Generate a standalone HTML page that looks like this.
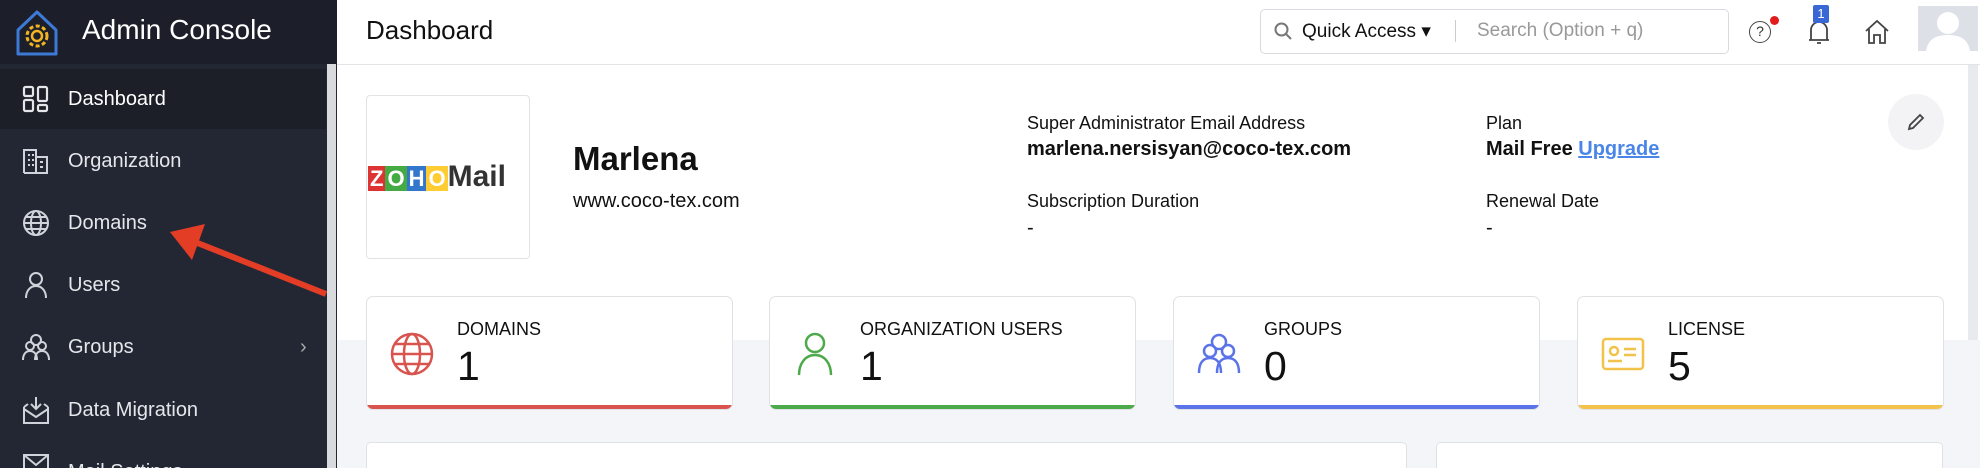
<!DOCTYPE html>
<html style="overflow:hidden;width:1980px;height:468px"><head><meta charset="utf-8"><style>
*{box-sizing:border-box;margin:0;padding:0}
body{width:1980px;height:468px;overflow:hidden;font-family:"Liberation Sans",sans-serif;background:#fff;color:#111}
#wrap{position:relative;width:1980px;height:468px;overflow:hidden}
.abs{position:absolute}
#side{left:0;top:0;width:337px;height:468px;background:#232734}
#sideh{left:0;top:0;width:337px;height:64px;background:#1c1f29}
#sb{left:327px;top:64px;width:9px;height:404px;background:#d9dadd}
.item{position:absolute;left:0;width:326px;height:60px;color:#e4e6ea;font-size:20px;display:flex;align-items:center;padding-left:68px}
.item svg{position:absolute;left:22px;top:50%;transform:translateY(-50%)}
.ttl{font-size:26px}
.card{position:absolute;top:296px;width:367px;height:114px;background:#fff;border:1px solid #dfe1e5;border-radius:7px;overflow:hidden}
.card .lbl{position:absolute;left:90px;top:22px;font-size:18px;color:#111}
.card .num{position:absolute;left:90px;top:46px;font-size:41px}
.card .bar{position:absolute;left:0;right:0;bottom:0;height:4px}
.card svg{position:absolute;left:22px;top:34px}
</style></head><body><div id="wrap">
<div class="abs" style="left:337px;top:340px;width:1643px;height:128px;background:#f4f5f8"></div>
<div class="abs" style="left:337px;top:64px;width:1643px;height:1px;background:#e3e4e8"></div>
<div class="abs" style="left:1968px;top:65px;width:10px;height:275px;background:#e9eaed"></div>

<div id="side" class="abs"></div>
<div id="sideh" class="abs"></div>
<div class="abs" style="left:0;top:69px;width:326px;height:60px;background:#1c1f28"></div>
<div id="sb" class="abs"></div>
<svg class="abs" style="left:14px;top:8px" width="46" height="50" viewBox="0 0 46 50"><path d="M4 22 L23 4 L42 22 V46 H4Z" fill="none" stroke="#3d7ad6" stroke-width="3" stroke-linejoin="round"/><circle cx="23" cy="28" r="10" fill="none" stroke="#f2b422" stroke-width="3" stroke-dasharray="4 2.5"/><circle cx="23" cy="28" r="5" fill="none" stroke="#f2b422" stroke-width="2.5"/></svg>
<div class="abs" style="left:82px;top:14px;color:#fff;font-size:28px">Admin Console</div>

<div class="item" style="top:69px;color:#fff"><svg width="28" height="28" viewBox="0 0 28 28" fill="none" stroke="#e4e6ea" stroke-width="2.2"><rect x="2" y="2" width="9" height="9" rx="1.5"/><rect x="16" y="2" width="9" height="14" rx="1.5"/><rect x="2" y="15" width="9" height="11" rx="1.5"/><rect x="16" y="20" width="9" height="6" rx="1.5"/></svg>Dashboard</div>
<div class="item" style="top:131px"><svg width="28" height="28" viewBox="0 0 28 28" fill="none" stroke="#d0d3d9" stroke-width="2"><path d="M2 26V3h12v23M14 10h11v16H2M6 8h2M10 8h2M6 13h2M10 13h2M6 18h2M10 18h2M18 15h3M18 20h3"/></svg>Organization</div>
<div class="item" style="top:193px"><svg width="28" height="28" viewBox="0 0 28 28" fill="none" stroke="#d0d3d9" stroke-width="2"><circle cx="14" cy="14" r="12"/><ellipse cx="14" cy="14" rx="5" ry="12"/><path d="M2 14h24M4 8h20M4 20h20"/></svg>Domains</div>
<div class="item" style="top:255px"><svg width="28" height="28" viewBox="0 0 28 28" fill="none" stroke="#d0d3d9" stroke-width="2"><circle cx="14" cy="8" r="6"/><path d="M4 27c0-7 4-12 10-12s10 5 10 12"/></svg>Users</div>
<div class="item" style="top:317px"><svg width="28" height="28" viewBox="0 0 28 28" fill="none" stroke="#d0d3d9" stroke-width="2"><circle cx="14" cy="7" r="5"/><circle cx="8" cy="13" r="4"/><circle cx="20" cy="13" r="4"/><path d="M1 27c0-6 3-9 7-9s7 3 7 9M13 27c0-6 3-9 7-9s7 3 7 9"/></svg>Groups<span style="position:absolute;left:300px;color:#aaa;font-size:20px">›</span></div>
<div class="item" style="top:380px"><svg width="28" height="30" viewBox="0 0 28 30" fill="none" stroke="#d0d3d9" stroke-width="2"><path d="M2 12v16h24V12M2 12l4-3M26 12l-4-3M2 14l12 8 12-8M14 2v12M9 9l5 5 5-5"/></svg>Data Migration</div>
<div class="item" style="top:442px;height:26px;align-items:flex-start;overflow:hidden"><svg style="top:22px" width="28" height="28" viewBox="0 0 28 28" fill="none" stroke="#d0d3d9" stroke-width="2"><rect x="2" y="5" width="24" height="18"/><path d="M2 5l12 10 12-10"/></svg><span style="margin-top:19px">Mail Settings</span></div>
<svg class="abs" style="left:160px;top:222px" width="175" height="80"><line x1="166" y1="72" x2="30" y2="18" stroke="#e43d26" stroke-width="6"/><polygon points="10,10 45,2 32,38" fill="#e43d26"/></svg>

<div class="abs ttl" style="left:366px;top:15px">Dashboard</div>
<div class="abs" style="left:1260px;top:9px;width:469px;height:45px;border:1px solid #d8dadf;border-radius:5px"></div>
<svg class="abs" style="left:1274px;top:22px" width="18" height="18" fill="none" stroke="#777" stroke-width="2"><circle cx="7.5" cy="7.5" r="6"/><path d="M12 12l5 5"/></svg>
<div class="abs" style="left:1302px;top:20px;font-size:19px">Quick Access ▾</div>
<div class="abs" style="left:1455px;top:20px;width:1px;height:22px;background:#ccc"></div>
<div class="abs" style="left:1477px;top:20px;font-size:19px;color:#999">Search (Option + q)</div>
<div class="abs" style="left:1749px;top:21px;width:22px;height:22px;border:1.5px solid #444;border-radius:50%;font-size:14px;text-align:center;line-height:19px;color:#333">?</div>
<div class="abs" style="left:1770px;top:16px;width:9px;height:9px;border-radius:50%;background:#e21c1c"></div>
<svg class="abs" style="left:1806px;top:18px" width="26" height="28" fill="none" stroke="#444" stroke-width="1.8"><path d="M5 22V12a8 8 0 0116 0v10H3h20M11 25h4"/></svg>
<div class="abs" style="left:1813px;top:5px;width:16px;height:18px;background:#3a67d6;color:#fff;font-size:13px;text-align:center;line-height:18px;border-radius:2px">1</div>
<svg class="abs" style="left:1864px;top:18px" width="26" height="28" fill="none" stroke="#444" stroke-width="1.8"><path d="M2 13L13 3l11 10M5 11v14h5v-8h6v8h5V11"/></svg>
<div class="abs" style="left:1918px;top:6px;width:60px;height:45px;background:#dde0e6;overflow:hidden"><svg width="60" height="45"><circle cx="30" cy="17" r="11" fill="#fff"/><path d="M8 45c2-12 10-16 22-16s20 4 22 16z" fill="#fff"/></svg></div>

<div class="abs" style="left:366px;top:95px;width:164px;height:164px;border:1px solid #e2e3e6;border-radius:4px"></div>
<div class="abs" style="left:368px;top:160px;font-size:22px;font-weight:bold"><span style="background:#d33;color:#fff;padding:0 2px">Z</span><span style="background:#4a4;color:#fff;padding:0 2px">O</span><span style="background:#37c;color:#fff;padding:0 2px">H</span><span style="background:#fc3;color:#fff;padding:0 2px">O</span><span style="font-size:30px;color:#333">Mail</span></div>
<div class="abs" style="left:573px;top:140px;font-size:33px;font-weight:bold">Marlena</div>
<div class="abs" style="left:573px;top:190px;font-size:20px">www.coco-tex.com</div>
<div class="abs" style="left:1027px;top:113px;font-size:18px">Super Administrator Email Address</div>
<div class="abs" style="left:1027px;top:138px;font-size:20px;font-weight:bold">marlena.nersisyan@coco-tex.com</div>
<div class="abs" style="left:1027px;top:191px;font-size:18px">Subscription Duration</div>
<div class="abs" style="left:1027px;top:217px;font-size:20px">-</div>
<div class="abs" style="left:1486px;top:113px;font-size:18px">Plan</div>
<div class="abs" style="left:1486px;top:138px;font-size:20px;font-weight:bold">Mail Free <span style="color:#4a86e8;text-decoration:underline">Upgrade</span></div>
<div class="abs" style="left:1486px;top:191px;font-size:18px">Renewal Date</div>
<div class="abs" style="left:1486px;top:217px;font-size:20px">-</div>
<div class="abs" style="left:1888px;top:94px;width:56px;height:56px;border-radius:50%;background:#f3f3f5"></div>
<svg class="abs" style="left:1906px;top:112px" width="20" height="20" fill="none" stroke="#444" stroke-width="1.8"><path d="M3 17l1-4L14 3l3 3L7 16z"/></svg>

<div class="card" style="left:366px"><svg width="46" height="46" fill="none" stroke="#d9534f" stroke-width="2.5"><circle cx="23" cy="23" r="20"/><ellipse cx="23" cy="23" rx="8" ry="20"/><path d="M3 23h40M6 13h34M6 33h34"/></svg><div class="lbl">DOMAINS</div><div class="num">1</div><div class="bar" style="background:#d9534f"></div></div>
<div class="card" style="left:769px"><svg width="46" height="46" fill="none" stroke="#4caa4a" stroke-width="2.5"><circle cx="23" cy="12" r="9"/><path d="M7 44c0-11 6-20 16-20s16 9 16 20"/></svg><div class="lbl">ORGANIZATION USERS</div><div class="num">1</div><div class="bar" style="background:#4caa4a"></div></div>
<div class="card" style="left:1173px"><svg width="46" height="46" fill="none" stroke="#5b73e8" stroke-width="2.5"><circle cx="23" cy="11" r="7"/><circle cx="14" cy="20" r="6"/><circle cx="32" cy="20" r="6"/><path d="M3 42c0-10 4-15 11-15s11 5 11 15M21 42c0-10 4-15 11-15s11 5 11 15"/></svg><div class="lbl">GROUPS</div><div class="num">0</div><div class="bar" style="background:#5b73e8"></div></div>
<div class="card" style="left:1577px"><svg width="46" height="46" fill="none" stroke="#f2c24b" stroke-width="2.5"><rect x="3" y="8" width="40" height="30" rx="3"/><circle cx="14" cy="20" r="4"/><path d="M8 30h14M24 18h12M24 24h12"/></svg><div class="lbl">LICENSE</div><div class="num">5</div><div class="bar" style="background:#f2c24b"></div></div>

<div class="abs" style="left:366px;top:442px;width:1041px;height:26px;background:#fff;border:1px solid #e0e1e5;border-bottom:none;border-radius:5px 5px 0 0"></div>
<div class="abs" style="left:1436px;top:442px;width:507px;height:26px;background:#fff;border:1px solid #e0e1e5;border-bottom:none;border-radius:5px 5px 0 0"></div>
</div></body></html>
